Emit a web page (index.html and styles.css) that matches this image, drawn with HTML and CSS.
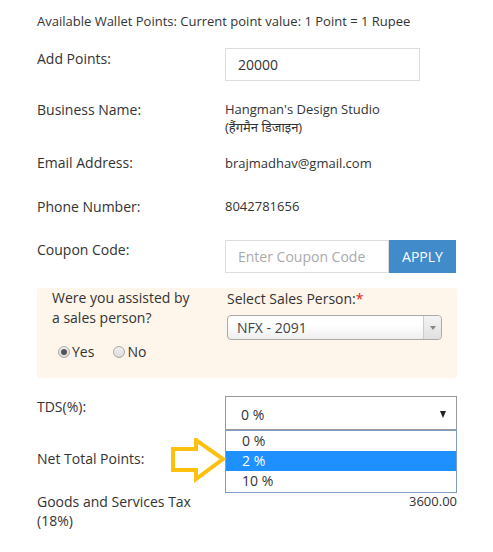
FILE: index.html
```html
<!DOCTYPE html>
<html>
<head>
<meta charset="utf-8">
<link rel="stylesheet" href="styles.css">
</head>
<body>
<div class="page">
  <div class="wallet">Available Wallet Points: Current point value: 1 Point = 1 Rupee</div>

  <div class="row r-add">
    <div class="label">Add Points:</div>
    <div class="value"><div class="input">20000</div></div>
  </div>

  <div class="row r-biz">
    <div class="label">Business Name:</div>
    <div class="value text">Hangman's Design Studio<br>(हैंगमैन डिजाइन)</div>
  </div>

  <div class="row r-email">
    <div class="label">Email Address:</div>
    <div class="value text">brajmadhav@gmail.com</div>
  </div>

  <div class="row r-phone">
    <div class="label">Phone Number:</div>
    <div class="value text">8042781656</div>
  </div>

  <div class="row r-coupon">
    <div class="label">Coupon Code:</div>
    <div class="value coupon">
      <div class="input placeholder">Enter Coupon Code</div>
      <div class="apply">APPLY</div>
    </div>
  </div>

  <div class="panel">
    <div class="assist">
      <div class="question">Were you assisted by<br>a sales person?</div>
      <div class="radios">
        <span class="radio checked"></span><span class="rlabel">Yes</span>
        <span class="radio"></span><span class="rlabel">No</span>
      </div>
    </div>
    <div class="sales">
      <div class="sales-label">Select Sales Person:<span class="req">*</span></div>
      <div class="chosen">
        <span class="chosen-text">NFX - 2091</span>
        <span class="chosen-arrow"><span class="tri-grey"></span></span>
      </div>
    </div>
  </div>

  <div class="row r-tds">
    <div class="label">TDS(%):</div>
    <div class="value tds-wrap">
      <div class="select">
        <span>0 %</span>
        <span class="tri-black"></span>
      </div>
      <div class="options">
        <div class="opt">0 %</div>
        <div class="opt sel">2 %</div>
        <div class="opt">10 %</div>
      </div>
      <svg class="pointer" width="60" height="52" viewBox="0 0 60 52">
        <polygon points="2,11 25,11 25,2 52,21 25,41 25,32 2,32" fill="none" stroke="#fdc00f" stroke-width="4" stroke-linejoin="miter"/>
      </svg>
    </div>
  </div>

  <div class="row r-net">
    <div class="label">Net Total Points:</div>
  </div>

  <div class="row r-gst">
    <div class="label">Goods and Services Tax<br>(18%)</div>
    <div class="value amount">3600.00</div>
  </div>
</div>
</body>
</html>
```

FILE: styles.css
```css
* { box-sizing: border-box; }
html, body { margin: 0; padding: 0; background: #fff; }
body {
  font-family: "Open Sans", "Noto Sans", "Noto Sans CJK SC", sans-serif;
  color: #333;
}
.page {
  width: 493px;
  height: 552px;
  overflow: hidden;
  padding: 11px 36px 0 37px;
}
.wallet {
  font-size: 13px;
  line-height: 20px;
  height: 20px;
}
.row {
  display: grid;
  grid-template-columns: 188px 232px;
}
.label {
  font-size: 14px;
  line-height: 20px;
  color: #333;
}
.value.text {
  font-size: 13px;
  line-height: 18px;
}
.input {
  height: 33px;
  border: 1px solid #ddd;
  font-size: 14px;
  line-height: 31px;
  padding-left: 12px;
  color: #333;
  background: #fff;
}
.r-add { margin-top: 17px; }
.r-add .label { padding-top: 1px; }
.r-add .input { width: 195px; }

.r-biz { margin-top: 18px; }
.r-biz .label { padding-top: 1px; }
.r-biz .value { padding-top: 1px; }

.r-email { margin-top: 17px; }
.r-email .value { padding-top: 1px; }
.r-phone { margin-top: 24px; }
.r-phone .value { padding-top: 0; }

.r-coupon { margin-top: 23px; }
.coupon { display: flex; }
.coupon .input { width: 164px; color: #aaa; font-size: 14px; }
.apply {
  width: 67px;
  height: 33px;
  background: #428bca;
  color: #fff;
  font-size: 14px;
  line-height: 33px;
  text-align: center;
}

.panel {
  margin-top: 15px;
  height: 90px;
  width: 420px;
  background: #fef6ea;
  border-radius: 3px;
  display: grid;
  grid-template-columns: 188px 232px;
}
.assist { padding: 0 0 0 15px; }
.question { font-size: 14px; line-height: 20px; }
.radios {
  display: flex;
  align-items: center;
  margin-top: 14px;
  padding-left: 6px;
  font-size: 14px;
  line-height: 20px;
}
.radio {
  width: 12px;
  height: 12px;
  border-radius: 50%;
  border: 1px solid #a8a8a8;
  background: linear-gradient(#f0f0f0, #dcdcdc);
  position: relative;
}
.radio.checked::after {
  content: "";
  position: absolute;
  left: 2px; top: 2px;
  width: 6px; height: 6px;
  border-radius: 50%;
  background: #555;
}
.rlabel { margin-left: 2px; margin-right: 19px; }
.sales { padding: 1px 0 0 2px; }
.sales-label { font-size: 14px; line-height: 20px; }
.req { color: #e02020; }
.chosen {
  margin-top: 6px;
  width: 215px;
  height: 25px;
  border: 1px solid #aaa;
  border-radius: 4px;
  background: linear-gradient(#ffffff 40%, #eeeeee);
  display: flex;
  align-items: center;
  justify-content: space-between;
}
.chosen-text { font-size: 14px; padding-left: 9px; color: #444; }
.chosen-arrow {
  width: 18px;
  height: 23px;
  border-left: 1px solid #ccc;
  background: linear-gradient(#f4f4f4, #e0e0e0);
  border-radius: 0 4px 4px 0;
  display: flex;
  align-items: center;
  justify-content: center;
}
.tri-grey {
  width: 0; height: 0;
  border-left: 3px solid transparent;
  border-right: 3px solid transparent;
  border-top: 4px solid #888;
}

.r-tds { margin-top: 18px; }
.r-tds .label { padding-top: 1px; }
.tds-wrap { position: relative; }
.select {
  height: 34px;
  border: 1px solid #999;
  font-size: 14px;
  padding: 0 10px 0 15px;
  display: flex;
  align-items: center;
  justify-content: space-between;
  color: #333;
  padding-top: 2px;
}
.tri-black {
  width: 0; height: 0;
  border-left: 3.5px solid transparent;
  border-right: 3.5px solid transparent;
  border-top: 7px solid #222;
}
.options {
  position: absolute;
  left: 0; top: 34px;
  width: 232px;
  border: 1px solid #7e9cc8;
  background: #fff;
  z-index: 2;
  padding-bottom: 1px;
}
.opt {
  height: 20px;
  font-size: 14px;
  line-height: 20px;
  padding-left: 16px;
  color: #333;
}
.opt.sel { background: #1e90ff; color: #fff; }
.pointer {
  position: absolute;
  left: -54px;
  top: 42px;
  z-index: 3;
}

.r-net { margin-top: 19px; }
.r-gst { margin-top: 23px; }
.r-gst .label { line-height: 19px; }
.amount { font-size: 13px; text-align: right; line-height: 18px; }
```
